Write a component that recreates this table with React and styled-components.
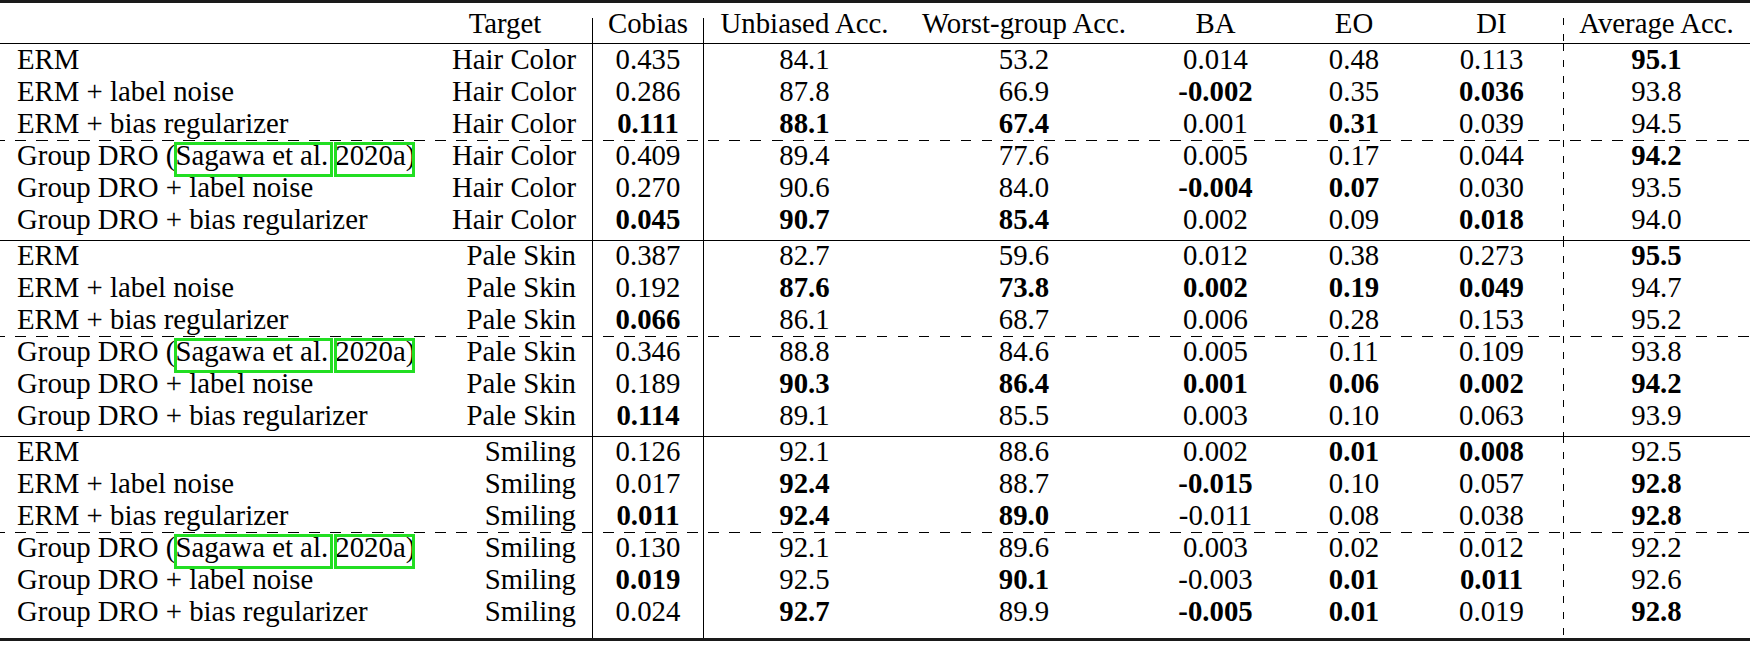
import React from "react";
import styled, { createGlobalStyle, css } from "styled-components";

const GlobalStyle = createGlobalStyle`
  html, body { margin: 0; padding: 0; background: #fff; }
  body {
    font-family: "Liberation Serif", "Times New Roman", Times, serif;
    color: #000;
  }
`;

const COLS = "418px 174px 111px 202px 238px 145px 132px 143px 187px";

const Table = styled.div`
  width: 1750px;
  font-size: 28.8px;
  border-top: 3px solid #1a1a1a;
  border-bottom: 3px solid #1a1a1a;
`;

const HeaderRow = styled.div`
  display: grid;
  grid-template-columns: ${COLS};
  padding-top: 15px;
  border-bottom: 1px solid #000;
`;

const Row = styled.div`
  display: grid;
  grid-template-columns: ${COLS};
  height: ${(p) => 32 + (p.$extra || 0)}px;
  ${(p) =>
    p.$top === "solid" &&
    css`
      box-shadow: inset 0 1px 0 #000;
    `}
  ${(p) =>
    p.$top === "dashed" &&
    css`
      background-image: repeating-linear-gradient(
        to right,
        #000 0 5.5px,
        transparent 5.5px 15.5px,
        #000 15.5px 21px
      );
      background-size: 100% 1px;
      background-repeat: no-repeat;
    `}
`;

const Cell = styled.div`
  white-space: nowrap;
  line-height: ${(p) => (p.$head ? "10px" : "30px")};
  height: ${(p) => (p.$head ? "25px" : "auto")};
  text-align: ${(p) => p.$align || "center"};
  font-weight: ${(p) => (p.$bold ? 700 : 400)};
  padding-left: ${(p) => (p.$align === "left" ? "17px" : "0")};
  padding-right: ${(p) => (p.$align === "right" ? "16px" : "0")};
  ${(p) =>
    p.$rule === "solid" &&
    css`
      border-left: 1px solid #000;
    `}
  ${(p) =>
    p.$rule === "dashed" &&
    css`
      background-image: repeating-linear-gradient(
        to bottom,
        #000 0 7px,
        transparent 7px 16px
      );
      background-size: 1px 100%;
      background-repeat: no-repeat;
      background-position: left top;
    `}
`;

const Cite = styled.span`
  position: relative;
  &::after {
    content: "";
    position: absolute;
    left: ${(p) => p.$l}px;
    right: ${(p) => p.$r}px;
    top: 3px;
    bottom: -6px;
    border: 3px solid #22de22;
    pointer-events: none;
  }
`;

const RULES = [null, null, "solid", "solid", null, null, null, null, "dashed"];

const headers = [
  "",
  "Target",
  "Cobias",
  "Unbiased Acc.",
  "Worst-group Acc.",
  "BA",
  "EO",
  "DI",
  "Average Acc.",
];

const CITE = "__cite__";

const blocks = [
  {
    target: "Hair Color",
    rows: [
      ["ERM", "0.435", "84.1", "53.2", "0.014", "0.48", "0.113", "*95.1"],
      ["ERM + label noise", "0.286", "87.8", "66.9", "*-0.002", "0.35", "*0.036", "93.8"],
      ["ERM + bias regularizer", "*0.111", "*88.1", "*67.4", "0.001", "*0.31", "0.039", "94.5"],
      [CITE, "0.409", "89.4", "77.6", "0.005", "0.17", "0.044", "*94.2"],
      ["Group DRO + label noise", "0.270", "90.6", "84.0", "*-0.004", "*0.07", "0.030", "93.5"],
      ["Group DRO + bias regularizer", "*0.045", "*90.7", "*85.4", "0.002", "0.09", "*0.018", "94.0"],
    ],
  },
  {
    target: "Pale Skin",
    rows: [
      ["ERM", "0.387", "82.7", "59.6", "0.012", "0.38", "0.273", "*95.5"],
      ["ERM + label noise", "0.192", "*87.6", "*73.8", "*0.002", "*0.19", "*0.049", "94.7"],
      ["ERM + bias regularizer", "*0.066", "86.1", "68.7", "0.006", "0.28", "0.153", "95.2"],
      [CITE, "0.346", "88.8", "84.6", "0.005", "0.11", "0.109", "93.8"],
      ["Group DRO + label noise", "0.189", "*90.3", "*86.4", "*0.001", "*0.06", "*0.002", "*94.2"],
      ["Group DRO + bias regularizer", "*0.114", "89.1", "85.5", "0.003", "0.10", "0.063", "93.9"],
    ],
  },
  {
    target: "Smiling",
    rows: [
      ["ERM", "0.126", "92.1", "88.6", "0.002", "*0.01", "*0.008", "92.5"],
      ["ERM + label noise", "0.017", "*92.4", "88.7", "*-0.015", "0.10", "0.057", "*92.8"],
      ["ERM + bias regularizer", "*0.011", "*92.4", "*89.0", "-0.011", "0.08", "0.038", "*92.8"],
      [CITE, "0.130", "92.1", "89.6", "0.003", "0.02", "0.012", "92.2"],
      ["Group DRO + label noise", "*0.019", "92.5", "*90.1", "-0.003", "*0.01", "*0.011", "92.6"],
      ["Group DRO + bias regularizer", "0.024", "*92.7", "89.9", "*-0.005", "*0.01", "0.019", "*92.8"],
    ],
  },
];

function MethodName({ name }) {
  if (name !== CITE) return name;
  return (
    <>
      Group DRO (<Cite $l={-1} $r={-5}>Sagawa et al.</Cite>{" "}
      <Cite $l={-1} $r={-9}>2020a</Cite>)
    </>
  );
}

export default function App() {
  return (
    <>
      <GlobalStyle />
      <Table>
        <HeaderRow>
          {headers.map((h, i) => (
            <Cell key={i} $head $rule={RULES[i]} $align={i === 0 ? "left" : "center"}>
              {h}
            </Cell>
          ))}
        </HeaderRow>
        {blocks.map((block, bi) =>
          block.rows.map((r, ri) => {
            const [name, ...vals] = r;
            const isLastOverall = bi === blocks.length - 1 && ri === block.rows.length - 1;
            const extra = isLastOverall ? 10 : ri === block.rows.length - 1 ? 4 : 0;
            const top = ri === 0 && bi > 0 ? "solid" : ri === 3 ? "dashed" : null;
            return (
              <Row key={`${bi}-${ri}`} $extra={extra} $top={top}>
                <Cell $align="left">
                  <MethodName name={name} />
                </Cell>
                <Cell $align="right">{block.target}</Cell>
                {vals.map((v, vi) => {
                  const bold = v.startsWith("*");
                  return (
                    <Cell key={vi} $bold={bold} $rule={RULES[vi + 2]}>
                      {bold ? v.slice(1) : v}
                    </Cell>
                  );
                })}
              </Row>
            );
          })
        )}
      </Table>
    </>
  );
}
